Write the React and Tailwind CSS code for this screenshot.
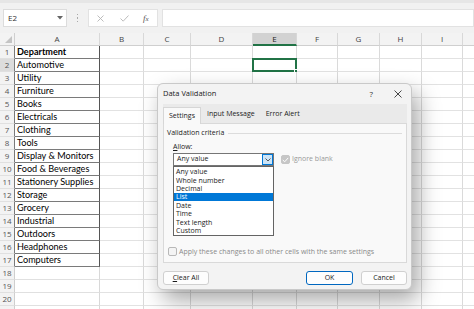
import React from "react";

const colW = ["w-[85px]", "w-[44px]", "w-[47px]", "w-[62px]", "w-[44px]", "w-[41px]", "w-[42px]", "w-[42px]", "w-[41px]", "w-[60px]"];
const letters = ["A", "B", "C", "D", "E", "F", "G", "H", "I", "J"];
const data = [
  "Department", "Automotive", "Utility", "Furniture", "Books", "Electricals", "Clothing", "Tools",
  "Display & Monitors", "Food & Beverages", "Stationery Supplies", "Storage", "Grocery", "Industrial",
  "Outdoors", "Headphones", "Computers",
];
const rows = Array.from({ length: 21 }, (_, i) => i + 1);
const listItems = ["Any value", "Whole number", "Decimal", "List", "Date", "Time", "Text length", "Custom"];

function TopBar() {
  return (
    <div className="h-[33px] bg-[#f1f1f1] flex flex-col">
      <div className="h-[3px] bg-[#e6e6e6]" />
      <div className="flex items-start pt-[6px]">
        <div className="ml-[3px] w-[64px] h-[18px] bg-white border border-[#dcdcdc] flex items-center justify-between pl-[4px] pr-[3px] text-[8px] text-[#333] [font-family:'Open_Sans',sans-serif]">
          <span>E2</span>
          <svg width="6" height="4" viewBox="0 0 6 4"><path d="M0 0 L6 0 L3 3.5 Z" fill="#666" /></svg>
        </div>
        <div className="w-[21px] h-[18px] flex flex-col items-center justify-center gap-[2px]">
          <div className="w-[1.5px] h-[1.5px] bg-[#aaa]" />
          <div className="w-[1.5px] h-[1.5px] bg-[#aaa]" />
          <div className="w-[1.5px] h-[1.5px] bg-[#aaa]" />
        </div>
        <div className="w-[70px] h-[18px] bg-white border border-[#e2e2e2] flex items-center">
          <svg className="ml-[8px]" width="7" height="7" viewBox="0 0 7 7"><path d="M0.5 0.5 L6.5 6.5 M6.5 0.5 L0.5 6.5" stroke="#b5b5b5" strokeWidth="0.9" /></svg>
          <svg className="ml-[16px]" width="9" height="7" viewBox="0 0 9 7"><path d="M0.5 3.5 L3.2 6.2 L8.5 0.5" stroke="#b5b5b5" strokeWidth="0.9" fill="none" /></svg>
          <span className="ml-[14px] text-[9px] italic text-[#555] [font-family:'Liberation_Serif',serif] leading-none">f<span className="text-[7px]">x</span></span>
        </div>
        <div className="ml-[4px] flex-1 h-[18px] bg-white border border-[#e2e2e2]" />
      </div>
    </div>
  );
}

function HeaderRow() {
  return (
    <div className="flex h-[13px] [font-family:'Open_Sans',sans-serif]">
      <div className="w-[15px] shrink-0 bg-[#f3f3f3] border-r border-b border-[#cfcfcf] relative">
        <svg className="absolute right-[2px] bottom-[2px]" width="7" height="7" viewBox="0 0 7 7"><path d="M7 0 L7 7 L0 7 Z" fill="#c4c4c4" /></svg>
      </div>
      {letters.map((l, i) => (
        <div
          key={l}
          className={`${colW[i]} shrink-0 flex items-center justify-center text-[8px] ${
            l === "E" ? "bg-[#d2d2d2] border-b-2 border-b-[#217346] text-[#222]" : "bg-[#f3f3f3] border-b border-b-[#cfcfcf] text-[#444]"
          } border-r border-r-[#d8d8d8]`}
        >
          {l === "J" ? "" : l}
        </div>
      ))}
    </div>
  );
}

function Row({ n }) {
  const text = data[n - 1];
  const inTable = n <= 17;
  return (
    <div className="flex h-[13px]">
      <div
        className={`w-[15px] shrink-0 flex items-center justify-center text-[8px] text-[#555] border-b border-b-[#e0e0e0] border-r [font-family:'Open_Sans',sans-serif] ${
          inTable ? "border-r-[#7a7a7a]" : "border-r-[#cfcfcf]"
        } ${n === 2 ? "bg-[#dcdcdc]" : "bg-[#f3f3f3]"}`}
      >
        {n <= 20 ? n : ""}
      </div>
      {letters.map((l, i) => {
        if (i === 0) {
          return (
            <div
              key={l}
              className={`${colW[i]} shrink-0 flex items-center pl-[2px] text-[9.1px] text-black whitespace-nowrap overflow-hidden ${
                inTable ? "border-r border-r-[#555] border-b border-b-[#7a7a7a]" : "border-r border-r-[#d8d8d8] border-b border-b-[#e0e0e0]"
              } ${n === 1 ? "font-bold" : ""}`}
            >
              {text}
            </div>
          );
        }
        return (
          <div key={l} className={`${colW[i]} shrink-0 relative border-r border-r-[#dadada] border-b border-b-[#e2e2e2]`}>
            {n === 2 && l === "E" && (
              <div className="absolute -left-[1px] -top-[1px] w-[45px] h-[14px] border-2 border-[#217346]">
                <div className="absolute -right-[3px] -bottom-[3px] w-[4px] h-[4px] bg-[#217346] border border-white" />
              </div>
            )}
          </div>
        );
      })}
    </div>
  );
}

function Checkbox({ checked }) {
  return (
    <div
      className={`w-[9px] h-[9px] rounded-[2px] flex items-center justify-center shrink-0 ${
        checked ? "bg-[#c6c6c6] border border-[#c6c6c6]" : "bg-[#f4f4f4] border border-[#b8b8b8]"
      }`}
    >
      {checked && (
        <svg width="7" height="6" viewBox="0 0 7 6"><path d="M0.8 3 L2.7 4.8 L6.2 0.9" stroke="#fff" strokeWidth="1" fill="none" /></svg>
      )}
    </div>
  );
}

function Dialog() {
  return (
    <div className="absolute left-[157px] top-[83px] w-[255px] h-[207px] bg-[#f3f3f3] border border-[#c9c9c9] rounded-[6px] shadow-[6px_10px_22px_rgba(0,0,0,0.35)] flex flex-col [font-family:'Open_Sans',sans-serif] text-[7px] text-[#1a1a1a]">
      <div className="h-[20px] flex items-center pl-[5px] pr-[9px] shrink-0">
        <span className="text-[7.5px]">Data Validation</span>
        <span className="ml-auto text-[8px] text-[#333]">?</span>
        <svg className="ml-[21px]" width="8" height="8" viewBox="0 0 8 8"><path d="M0.5 0.5 L7.5 7.5 M7.5 0.5 L0.5 7.5" stroke="#333" strokeWidth="0.9" /></svg>
      </div>
      <div className="mx-[5px] mr-[4px] h-[19px] bg-[#eaeaea] flex items-end shrink-0 relative z-10">
        <div className="w-[38px] h-[17px] bg-[#f9f9f9] border border-b-0 border-[#d6d6d6] flex items-center justify-center -mb-px">Settings</div>
        <div className="ml-[6px] h-[17px] flex items-center">Input Message</div>
        <div className="ml-[11px] h-[17px] flex items-center">Error Alert</div>
      </div>
      <div className="mx-[5px] mr-[4px] h-[140px] bg-[#f9f9f9] border border-[#d9d9d9] flex flex-col relative shrink-0">
        <div className="h-[10px] mt-[4px] flex items-center pl-[3px]">
          <span>Validation criteria</span>
          <div className="flex-1 h-px bg-[#dcdcdc] ml-[4px] mr-[4px]" />
        </div>
        <div className="h-[10px] mt-[4px] flex items-center pl-[9px]">
          <span><span className="underline">A</span>llow:</span>
        </div>
        <div className="mt-[1px] flex items-center pl-[9px]">
          <div className="w-[101px] h-[13px] bg-white border border-[#767676] flex items-center pl-[3px] relative">
            <span>Any value</span>
            <div className="absolute right-[0px] top-[0px] w-[11px] h-[11px] bg-[#cce4f7] border border-[#0078d7] flex items-center justify-center">
              <svg width="6" height="4" viewBox="0 0 6 4"><path d="M0.5 0.5 L3 3 L5.5 0.5" stroke="#333" strokeWidth="0.8" fill="none" /></svg>
            </div>
          </div>
          <div className="ml-[7px] flex items-center gap-[2px]">
            <Checkbox checked />
            <span className="text-[#9a9a9a]">Ignore blank</span>
          </div>
        </div>
        <div className="absolute left-[9px] top-[42px] w-[101px] bg-white border border-[#646464] flex flex-col py-[0.5px]">
          {listItems.map((it) => (
            <div
              key={it}
              className={`h-[8.4px] flex items-center pl-[2px] leading-none ${it === "List" ? "bg-[#0078d7] text-white" : ""}`}
            >
              {it}
            </div>
          ))}
        </div>
        <div className="mt-auto mb-[5px] flex items-center pl-[4px] gap-[2px]">
          <Checkbox />
          <span className="text-[#8a8a8a]">Apply these changes to all other cells with the same settings</span>
        </div>
      </div>
      <div className="flex items-center mx-[5px] mr-[4px] mt-[8px]">
        <div className="w-[46px] h-[14px] bg-[#fdfdfd] border border-[#d0d0d0] rounded-[3px] flex items-center justify-center">
          <span><span className="underline">C</span>lear All</span>
        </div>
        <div className="ml-auto w-[47px] h-[14px] bg-[#fdfdfd] border border-[#0067c0] rounded-[3px] flex items-center justify-center">OK</div>
        <div className="ml-[8px] w-[46px] h-[14px] bg-[#fdfdfd] border border-[#d0d0d0] rounded-[3px] flex items-center justify-center">Cancel</div>
      </div>
    </div>
  );
}

export default function App() {
  return (
    <div className="w-[474px] h-[309px] overflow-hidden bg-white relative [font-family:'Lato',sans-serif]">
      <TopBar />
      <HeaderRow />
      <div>
        {rows.map((n) => (
          <Row key={n} n={n} />
        ))}
      </div>
      <Dialog />
    </div>
  );
}
